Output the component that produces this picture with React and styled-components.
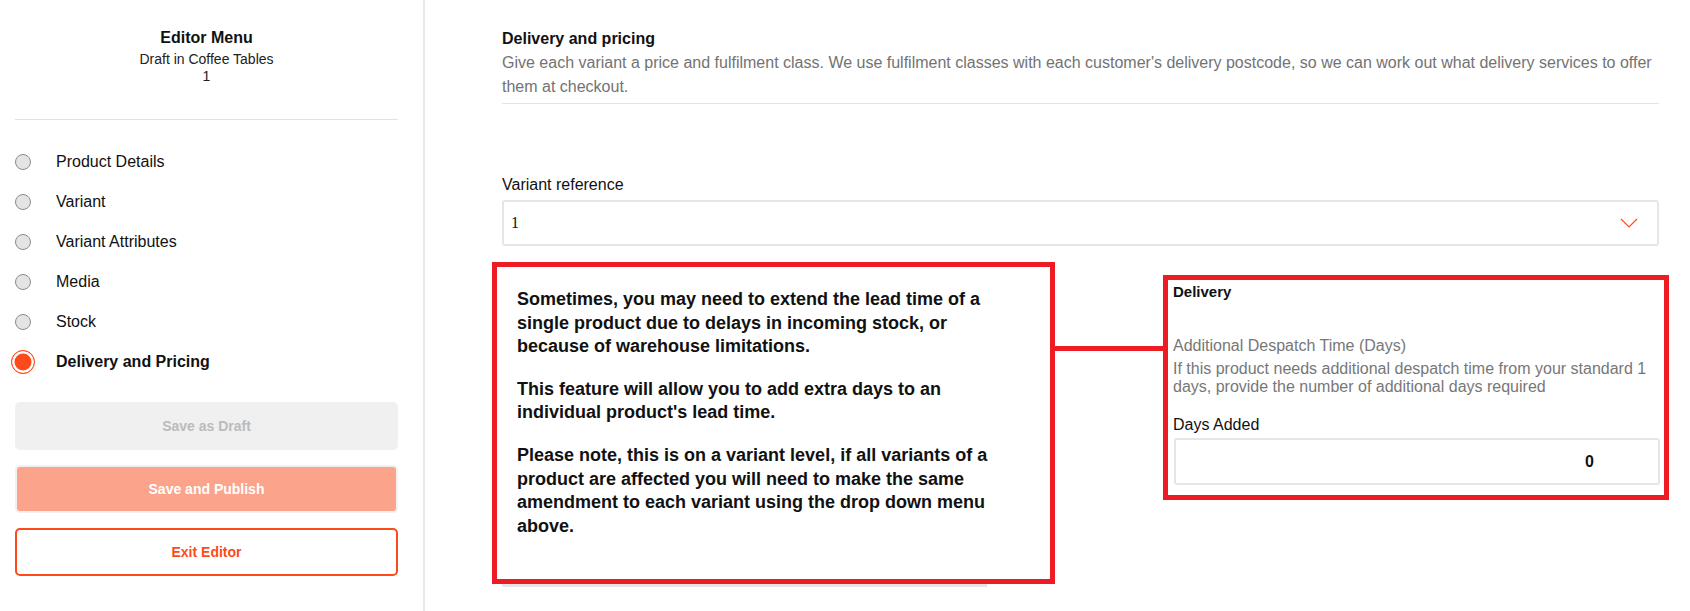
import React from "react";
import styled, { createGlobalStyle } from "styled-components";

const GlobalStyle = createGlobalStyle`
  html, body { margin: 0; padding: 0; background: #ffffff; }
  body { font-family: "Liberation Sans", Arial, sans-serif; color: #111; }
  * { box-sizing: border-box; }
`;

const ORANGE = "#fe4a1a";
const RED = "#ed1c24";

const Page = styled.div`
  display: flex;
  min-height: 100vh;
  width: 100%;
`;

const Sidebar = styled.aside`
  flex: 0 0 425px;
  border-right: 2px solid #e8e8e8;
  padding: 29px 25px 0 15px;
  display: flex;
  flex-direction: column;
`;

const MenuHeader = styled.div`
  text-align: center;
  padding-bottom: 34px;
  border-bottom: 1px solid #e2e2e2;
`;

const MenuTitle = styled.div`
  font-size: 16px;
  font-weight: 700;
  line-height: 18px;
  color: #111;
`;

const MenuSub = styled.div`
  margin-top: 4px;
  font-size: 14px;
  line-height: 17px;
  color: #222;
`;

const NavList = styled.ul`
  list-style: none;
  margin: 22px 0 0;
  padding: 0;
`;

const NavItem = styled.li`
  display: flex;
  align-items: center;
  height: 40px;
  gap: 25px;
  font-size: 16px;
  color: #111;
  font-weight: ${(p) => (p.$active ? 700 : 400)};
`;

const RadioSlot = styled.span`
  width: 16px;
  height: 24px;
  display: flex;
  align-items: center;
  justify-content: center;
  flex-shrink: 0;
`;

const Radio = styled.span`
  flex-shrink: 0;
  border-radius: 50%;
  width: ${(p) => (p.$active ? "24px" : "16px")};
  height: ${(p) => (p.$active ? "24px" : "16px")};
  background: ${(p) => (p.$active ? ORANGE : "#e4e4e4")};
  border: ${(p) => (p.$active ? `1.5px solid ${ORANGE}` : "1px solid #8c8c8c")};
  box-shadow: ${(p) => (p.$active ? "inset 0 0 0 2.5px #fff" : "none")};
`;

const ButtonStack = styled.div`
  display: flex;
  flex-direction: column;
  gap: 15px;
  margin-top: 20px;
`;

const ActionButton = styled.button`
  height: 48px;
  width: 100%;
  border-radius: 5px;
  font-family: "Liberation Sans", Arial, sans-serif;
  font-size: 14px;
  font-weight: 700;
  cursor: pointer;
  ${(p) =>
    p.$variant === "draft" &&
    `
    background: #f0f0f0;
    border: none;
    color: #bbbbbb;
  `}
  ${(p) =>
    p.$variant === "publish" &&
    `
    background: #fba48b;
    border: 2px solid #f1f1f1;
    color: #ffffff;
  `}
  ${(p) =>
    p.$variant === "exit" &&
    `
    background: #ffffff;
    border: 2px solid ${ORANGE};
    color: ${ORANGE};
  `}
`;

const Main = styled.main`
  flex: 1;
  padding: 30px 31px 0 77px;
  min-width: 0;
`;

const SectionHeader = styled.header`
  padding-bottom: 4px;
  border-bottom: 1px solid #e4e4e4;
`;

const SectionTitle = styled.h2`
  margin: 0;
  font-size: 16px;
  line-height: 18px;
  font-weight: 700;
  color: #111;
`;

const SectionText = styled.p`
  margin: 3px 0 0;
  font-size: 16px;
  line-height: 24px;
  color: #737373;
`;

const FieldLabel = styled.label`
  display: block;
  font-size: 16px;
  line-height: 18px;
  color: ${(p) => (p.$muted ? "#777" : "#111")};
  margin-top: ${(p) => p.$top || 0}px;
`;

const SelectBox = styled.div`
  margin-top: 6px;
  height: 46px;
  border: 2px solid #e6e6e6;
  border-radius: 3px;
  display: flex;
  align-items: center;
  justify-content: space-between;
  padding: 0 19px 0 7px;
  font-family: "Liberation Serif", "Times New Roman", serif;
  font-size: 16px;
  color: #111;
`;

const CalloutRow = styled.div`
  display: flex;
  align-items: flex-start;
  margin: 16px -10px 0;
`;

const CalloutColumn = styled.div`
  flex: 0 0 563px;
  display: flex;
  flex-direction: column;
`;

const Callout = styled.div`
  height: 322px;
  border: 5px solid ${RED};
  padding: 21px 29px 0 20px;
  font-size: 18px;
  line-height: 23.6px;
  font-weight: 700;
  color: #111;
  background: #fff;
`;

const CalloutPara = styled.p`
  margin: 0 0 19px;
`;

const UnderShadow = styled.div`
  margin: 0 68px 0 10px;
  height: 3px;
  background: #e6e6e6;
`;

const Connector = styled.div`
  flex: 0 0 108px;
  height: 5px;
  margin-top: 84px;
  background: ${RED};
`;

const DeliveryPanel = styled.section`
  flex: 0 0 506px;
  margin-top: 13px;
  border: 5px solid ${RED};
  padding: 3px 4px 10px 5px;
`;

const PanelTitle = styled.div`
  font-size: 15px;
  line-height: 18px;
  font-weight: 700;
  color: #111;
`;

const Hint = styled.p`
  margin: 5px 0 0;
  font-size: 16px;
  line-height: 17.5px;
  color: #777;
`;

const NumberBox = styled.div`
  margin: 4px 0 0 1px;
  height: 47px;
  border: 2px solid #e6e6e6;
  border-radius: 3px;
  display: flex;
  align-items: center;
  justify-content: flex-end;
  padding-right: 64px;
  font-size: 16px;
  font-weight: 700;
  color: #111;
`;

const Chevron = () => (
  <svg width="18" height="10" viewBox="0 0 18 10" fill="none">
    <polyline points="1,1 9,9 17,1" stroke={ORANGE} strokeWidth="1.2" />
  </svg>
);

const navItems = [
  "Product Details",
  "Variant",
  "Variant Attributes",
  "Media",
  "Stock",
  "Delivery and Pricing",
];

export default function App() {
  return (
    <>
      <GlobalStyle />
      <Page>
        <Sidebar>
          <MenuHeader>
            <MenuTitle>Editor Menu</MenuTitle>
            <MenuSub>
              Draft in Coffee Tables
              <br />1
            </MenuSub>
          </MenuHeader>
          <NavList>
            {navItems.map((item, i) => {
              const active = i === navItems.length - 1;
              return (
                <NavItem key={item} $active={active}>
                  <RadioSlot>
                    <Radio $active={active} />
                  </RadioSlot>
                  {item}
                </NavItem>
              );
            })}
          </NavList>
          <ButtonStack>
            <ActionButton $variant="draft">Save as Draft</ActionButton>
            <ActionButton $variant="publish">Save and Publish</ActionButton>
            <ActionButton $variant="exit">Exit Editor</ActionButton>
          </ButtonStack>
        </Sidebar>
        <Main>
          <SectionHeader>
            <SectionTitle>Delivery and pricing</SectionTitle>
            <SectionText>
              Give each variant a price and fulfilment class. We use fulfilment classes with each
              customer's delivery postcode, so we can work out what delivery services to offer them
              at checkout.
            </SectionText>
          </SectionHeader>
          <FieldLabel $top={72}>Variant reference</FieldLabel>
          <SelectBox>
            <span>1</span>
            <Chevron />
          </SelectBox>
          <CalloutRow>
            <CalloutColumn>
              <Callout>
                <CalloutPara>
                  Sometimes, you may need to extend the lead time of a single product due to delays
                  in incoming stock, or because of warehouse limitations.
                </CalloutPara>
                <CalloutPara>
                  This feature will allow you to add extra days to an individual product's lead time.
                </CalloutPara>
                <CalloutPara>
                  Please note, this is on a variant level, if all variants of a product are affected
                  you will need to make the same amendment to each variant using the drop down menu
                  above.
                </CalloutPara>
              </Callout>
              <UnderShadow />
            </CalloutColumn>
            <Connector />
            <DeliveryPanel>
              <PanelTitle>Delivery</PanelTitle>
              <FieldLabel $muted $top={36}>
                Additional Despatch Time (Days)
              </FieldLabel>
              <Hint>
                If this product needs additional despatch time from your standard 1 days, provide the
                number of additional days required
              </Hint>
              <FieldLabel $top={21}>Days Added</FieldLabel>
              <NumberBox>0</NumberBox>
            </DeliveryPanel>
          </CalloutRow>
        </Main>
      </Page>
    </>
  );
}
